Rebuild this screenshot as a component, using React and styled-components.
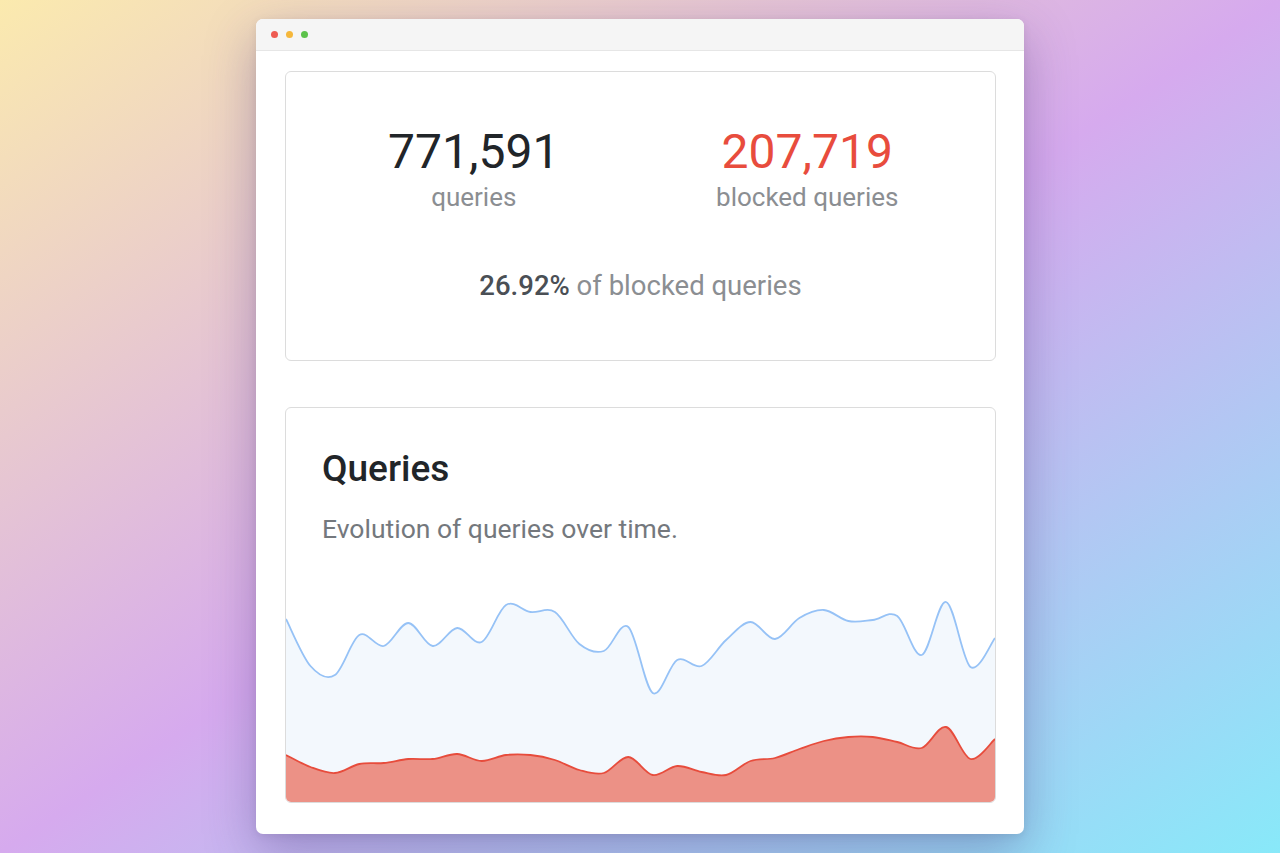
import React from "react";
import styled, { createGlobalStyle } from "styled-components";

const GlobalStyle = createGlobalStyle`
  html, body {
    margin: 0;
    padding: 0;
  }
  body {
    font-family: Roboto, "Liberation Sans", sans-serif;
    background: linear-gradient(to bottom right, #fbeaae 0%, #d6aaee 50%, #88e9f9 100%);
    min-height: 100vh;
  }
`;

const Page = styled.div`
  height: 853px;
  display: flex;
  align-items: center;
  justify-content: center;
`;

const Window = styled.div`
  width: 768px;
  background: #ffffff;
  border-radius: 7px;
  overflow: hidden;
  box-shadow: 0 18px 50px rgba(70, 50, 120, 0.35), 0 2px 8px rgba(0, 0, 0, 0.08);
`;

const TitleBar = styled.div`
  height: 31px;
  background: #f5f5f5;
  border-bottom: 1px solid #e6e6e6;
  display: flex;
  align-items: center;
  gap: 8px;
  padding-left: 15px;
`;

const Dot = styled.span`
  width: 7px;
  height: 7px;
  border-radius: 50%;
  background: ${(props) => props.color};
`;

const Content = styled.div`
  padding: 20px 28px 31px 29px;
  display: flex;
  flex-direction: column;
  gap: 46px;
`;

const Card = styled.div`
  background: #ffffff;
  border: 1px solid #dcdcdc;
  border-radius: 6px;
  overflow: hidden;
`;

const StatsCard = styled(Card)`
  padding: 51px 21px 58px;
  text-align: center;
`;

const StatsRow = styled.div`
  display: grid;
  grid-template-columns: 1fr 1fr;
`;

const Stat = styled.div`
  display: flex;
  flex-direction: column;
  align-items: center;
`;

const StatValue = styled.div`
  font-size: 48px;
  line-height: 1.2;
  font-weight: 400;
  color: ${(props) => props.color || "#212529"};
`;

const StatLabel = styled.div`
  margin-top: 2px;
  font-size: 26px;
  line-height: 1.2;
  color: #8b8e92;
`;

const Ratio = styled.div`
  margin-top: 56px;
  font-size: 27.5px;
  line-height: 1.2;
  color: #8b8e92;

  strong {
    font-weight: 500;
    color: #4a4f55;
  }
`;

const ChartCard = styled(Card)`
  padding-top: 39px;
`;

const ChartHead = styled.div`
  padding: 0 36px;
`;

const ChartTitle = styled.h2`
  margin: 0;
  font-size: 37px;
  line-height: 1.2;
  font-weight: 500;
  color: #212529;
`;

const ChartText = styled.p`
  margin: 21px 0 0;
  font-size: 26.5px;
  line-height: 1.2;
  color: #74787d;
`;

const ChartBox = styled.div`
  margin-top: 48px;
  height: 210px;

  svg {
    display: block;
    width: 100%;
    height: 100%;
  }
`;

// y values in page pixels, chart top sits at 593
const total = [620, 667, 676, 636, 647, 624, 647, 629, 643, 606, 613, 613, 645, 652, 628, 694, 661, 667, 641, 623, 640, 619, 611, 622, 621, 617, 656, 603, 668, 639];
const blocked = [756, 768, 774, 765, 764, 760, 760, 755, 762, 756, 756, 761, 771, 774, 758, 776, 767, 773, 776, 762, 759, 750, 742, 738, 738, 743, 749, 728, 760, 740];

const W = 710;
const H = 210;

const toPoints = (data) =>
  data.map((v, i) => [(i * W) / (data.length - 1), v - 593]);

const smooth = (pts) => {
  let d = `M${pts[0][0]},${pts[0][1]}`;
  for (let i = 0; i < pts.length - 1; i++) {
    const p0 = pts[i - 1] || pts[i];
    const p1 = pts[i];
    const p2 = pts[i + 1];
    const p3 = pts[i + 2] || p2;
    const c1x = p1[0] + (p2[0] - p0[0]) / 6;
    const c1y = p1[1] + (p2[1] - p0[1]) / 6;
    const c2x = p2[0] - (p3[0] - p1[0]) / 6;
    const c2y = p2[1] - (p3[1] - p1[1]) / 6;
    d += ` C${c1x.toFixed(1)},${c1y.toFixed(1)} ${c2x.toFixed(1)},${c2y.toFixed(1)} ${p2[0].toFixed(1)},${p2[1]}`;
  }
  return d;
};

const Chart = () => {
  const blue = smooth(toPoints(total));
  const red = smooth(toPoints(blocked));
  const close = ` L${W},${H} L0,${H} Z`;
  return (
    <svg viewBox={`0 0 ${W} ${H}`} preserveAspectRatio="none">
      <path d={blue + close} fill="#f3f8fd" />
      <path d={blue} fill="none" stroke="#96c2f6" strokeWidth="1.8" />
      <path d={red + close} fill="#ec9186" />
      <path d={red} fill="none" stroke="#e74c3c" strokeWidth="1.8" />
    </svg>
  );
};

const App = () => {
  return (
    <>
      <GlobalStyle />
      <Page>
        <Window>
          <TitleBar>
            <Dot color="#ee5b52" />
            <Dot color="#f5b73b" />
            <Dot color="#5cc24b" />
          </TitleBar>
          <Content>
            <StatsCard>
              <StatsRow>
                <Stat>
                  <StatValue>771,591</StatValue>
                  <StatLabel>queries</StatLabel>
                </Stat>
                <Stat>
                  <StatValue color="#e84c3d">207,719</StatValue>
                  <StatLabel>blocked queries</StatLabel>
                </Stat>
              </StatsRow>
              <Ratio>
                <strong>26.92%</strong> of blocked queries
              </Ratio>
            </StatsCard>
            <ChartCard>
              <ChartHead>
                <ChartTitle>Queries</ChartTitle>
                <ChartText>Evolution of queries over time.</ChartText>
              </ChartHead>
              <ChartBox>
                <Chart />
              </ChartBox>
            </ChartCard>
          </Content>
        </Window>
      </Page>
    </>
  );
};

export default App;
